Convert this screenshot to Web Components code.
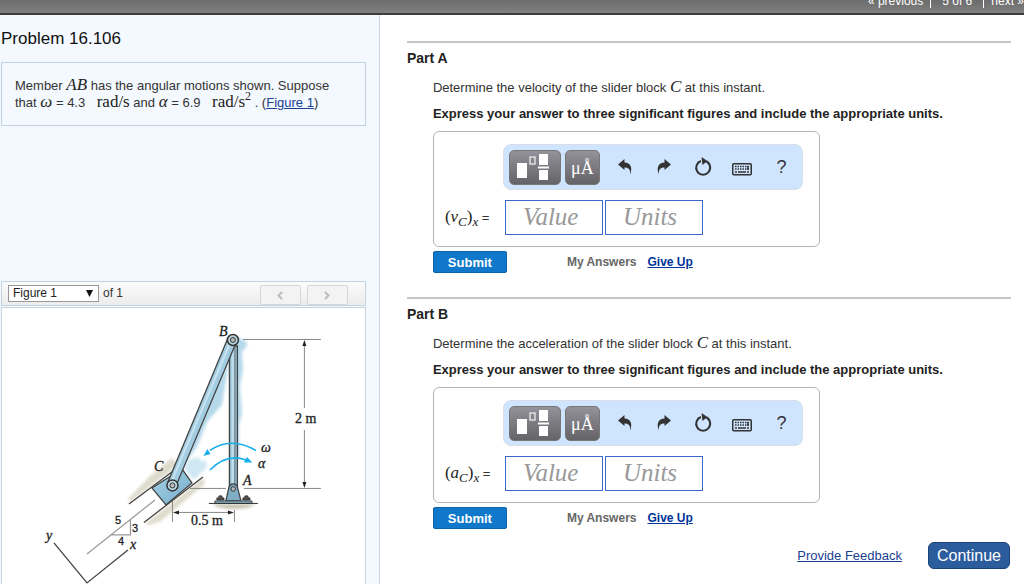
<!DOCTYPE html>
<html lang="en">
<head>
<meta charset="utf-8">
<meta name="viewport" content="width=device-width, initial-scale=1">
<title>Problem 16.106</title>
<style>
  body {
    margin: 0;
    font: 13px/17px "Liberation Sans", Arial, sans-serif;
    color: #333;
    background: #fff;
  }
</style>
</head>
<body>
<homework-page>
  <page-nav slot="nav"></page-nav>
  <problem-statement slot="problem" heading="Problem 16.106">Member <math-var>AB</math-var> has the angular motions shown. Suppose that <math-var>ω</math-var> = 4.3 &nbsp;<math-var upright>rad/s</math-var> and <math-var>α</math-var> = 6.9 &nbsp;<math-var upright>rad/s<sup>2</sup></math-var> . (<a href="#figure">Figure 1</a>)</problem-statement>
  <figure-viewer slot="problem" id="figure"><linkage-figure></linkage-figure></figure-viewer>
  <answer-part heading="Part A" symbol="v">Determine the velocity of the slider block <math-var>C</math-var> at this instant.</answer-part>
  <answer-part heading="Part B" symbol="a">Determine the acceleration of the slider block <math-var>C</math-var> at this instant.</answer-part>
  <page-footer slot="footer"></page-footer>
</homework-page>

<script>
class HomeworkPage extends HTMLElement {
  connectedCallback() {
    this.attachShadow({ mode: "open" }).innerHTML = `
      <style>
        :host {display: flex; flex-direction: column; min-height: 100vh;}
        .columns {display: grid; grid-template-columns: 37.1% 1fr; flex: 1;}
        aside {
          display: flex; flex-direction: column; justify-content: space-between;
          box-sizing: border-box; padding: 14px 13px 0 1px;
          background: #f4f9ff; border-right: 1px solid #c9d7e4;
        }
        main {padding: 26px 13px 0 27px;}
      </style>
      <slot name="nav"></slot>
      <div class="columns">
        <aside><slot name="problem"></slot></aside>
        <main><slot></slot><slot name="footer"></slot></main>
      </div>
    `;
  }
}
customElements.define("homework-page", HomeworkPage);

class PageNav extends HTMLElement {
  connectedCallback() {
    this.attachShadow({ mode: "open" }).innerHTML = `
      <style>
        :host {
          display: flex; justify-content: flex-end; align-items: flex-end;
          box-sizing: border-box; height: 15px; overflow: hidden; padding-bottom: 5px;
          background: linear-gradient(#6c6c6c, #808080);
          border-bottom: 2px solid #3c3c3c;
          font-size: 12px; line-height: 14px; color: #fff;
        }
        a {color: inherit; text-decoration: none; white-space: nowrap;}
        span {border: 1px solid #fff; border-width: 0 1px; padding: 0 11px; margin: 0 7px;}
      </style>
      <a href="#previous">« previous</a><span>5 of 6</span><a href="#next">next »</a>
    `;
  }
}
customElements.define("page-nav", PageNav);

class MathVar extends HTMLElement {
  connectedCallback() {
    this.attachShadow({ mode: "open" }).innerHTML = `
      <style>
        :host {font: italic 17px/0 "Liberation Serif", "Times New Roman", serif; color: #222;}
        :host([upright]) {font-style: normal;}
        ::slotted(sup) {font-size: 12px; line-height: 0;}
      </style><slot></slot>`;
  }
}
customElements.define("math-var", MathVar);

class ProblemStatement extends HTMLElement {
  connectedCallback() {
    this.attachShadow({ mode: "open" }).innerHTML = `
      <style>
        :host {display: block;}
        h1 {margin: 0 0 13px; font-size: 17px; line-height: 20px; font-weight: normal; color: #111;}
        p {margin: 0; padding: 14px 13px; border: 1px solid #bfd2e0;}
        ::slotted(a) {color: #1a3f94;}
      </style>
      <h1>${this.getAttribute("heading")}</h1>
      <p><slot></slot></p>
    `;
  }
}
customElements.define("problem-statement", ProblemStatement);

class FigureViewer extends HTMLElement {
  connectedCallback() {
    this.attachShadow({ mode: "open" }).innerHTML = `
      <style>
        :host {display: block;}
        .bar {
          display: flex; align-items: center; box-sizing: border-box; height: 25px;
          padding: 0 17px 0 6px; margin-bottom: 1px;
          border: 1px solid #c3d3e0; background: linear-gradient(#fbfbfb, #ececec);
        }
        .pick {display: grid; align-items: center; margin-right: 4px;}
        .pick > * {grid-area: 1 / 1;}
        .pick svg {justify-self: end; margin-right: 6px; pointer-events: none;}
        select {
          appearance: none; width: 91px; height: 17px; padding: 0 20px 0 4px;
          border: 1px solid #999; border-radius: 0; background: #fff;
          font: 12px/15px "Liberation Sans", Arial, sans-serif; color: #222;
        }
        .of {flex: 1; font-size: 12px;}
        button {
          display: grid; place-items: center; width: 41px; height: 20px; padding: 0; margin: 3px 0 0 6px;
          border: 1px solid #d6d6d6; border-radius: 2px; background: #f3f3f3;
        }
        .frame {border: 1px solid #c3d3e0; border-bottom: 0; background: #fff;}
      </style>
      <div class="bar">
        <div class="pick">
          <select id="pick" aria-label="Figure"><option>Figure 1</option></select>
          <svg width="7" height="7"><path d="M0 0h7L3.500 7z" fill="#111"/></svg>
        </div>
        <label class="of" for="pick">of 1</label>
        <button disabled aria-label="Previous figure"><svg width="6" height="9"><path d="M5 1L1.500 4.500 5 8" fill="none" stroke="#bbb" stroke-width="2"/></svg></button>
        <button disabled aria-label="Next figure"><svg width="6" height="9"><path d="M1 1l3.500 3.500L1 8" fill="none" stroke="#bbb" stroke-width="2"/></svg></button>
      </div>
      <div class="frame"><slot></slot></div>
    `;
  }
}
customElements.define("figure-viewer", FigureViewer);

class LinkageFigure extends HTMLElement {
  connectedCallback() {
    this.attachShadow({ mode: "open" }).innerHTML = `
      <style>
        :host {display: block;}
        svg {display: block; width: 100%;}
        text {font: 14px "Liberation Serif", serif; fill: #222; stroke: #222; stroke-width: .3px;}
        .it {font-style: italic;}
        .sm {font: 11px "Liberation Sans", sans-serif;}
        .dim {stroke: #888; fill: none;}
        .edge {stroke: #444; stroke-width: 1.3;}
      </style>
      <svg viewBox="2 308 363 276" role="img" aria-label="Linkage with slider block C">
        <defs>
          <filter id="soft" x="-30%" y="-30%" width="160%" height="160%"><feGaussianBlur stdDeviation="1.500"/></filter>
          <linearGradient id="bar"><stop offset="0" stop-color="#7fb2cc"/><stop offset=".4" stop-color="#c3e1ef"/><stop offset="1" stop-color="#86bad5"/></linearGradient>
          <linearGradient id="block" x2="1" y2="1"><stop offset="0" stop-color="#a8d3e7"/><stop offset="1" stop-color="#74acca"/></linearGradient>
        </defs>
        <g filter="url(#soft)">
          <path d="M130 502l49-37-7-7-22 18-22 23z" fill="#dedbcc"/>
          <path d="M145 524l58-46 2 6-44 37-11 4z" fill="#dedbcc"/>
          <path d="M213 504h43l-8 4-9 1-10 0-12-2z" fill="#c9c6b3"/>
          <path d="M236 337l10 4 1 5-5 6 1 18-3 16 2 27-3 13v32h-4zM229 362l-7 43-15 17-10 25-12 16 2-20z" fill="#b5d9ea"/>
          <path d="M184 468l5-8 9-3 5 5 3-3 1 8-13 13z" fill="#cfe7f2"/>
        </g>
        <path class="dim" d="M243 339.500h78M244 488.500h77M190 488.500h36M304.500 344v64M304.500 430v54M172.500 495v27M234.500 510v12M177 512.500h53"/>
        <path d="M304.500 340l-2 6h4zM304.500 488l-2-6h4zM173 512.500l6-2v4zM234 512.500l-6-2v4z" fill="#222"/>
        <path d="M152 488l30-19 10 14-26 22z" fill="url(#block)" class="edge"/>
        <path class="edge" d="M129 504l49-36.500M144 522.500l59-45.500" fill="none"/>
        <path d="M229.500 346h8v140h-8z" fill="url(#bar)" class="edge"/>
        <path d="M235 346v140" stroke="#666"/>
        <path d="M228 338L168 482l8 4 60-143z" fill="#a2cde2" class="edge"/>
        <path d="M230.500 342L171.500 482" stroke="#c9e4f0" stroke-width="2"/>
        <circle cx="233" cy="340" r="5.500" fill="#b9d7e4" stroke="#333" stroke-width="1.500"/>
        <circle cx="233" cy="340" r="2.500" fill="#bbb" stroke="#333"/>
        <circle cx="172.500" cy="485.500" r="5.500" fill="#b9d7e4" stroke="#333" stroke-width="1.500"/>
        <circle cx="172.500" cy="485.500" r="2.500" fill="#bbb" stroke="#333"/>
        <path d="M226 501l3-14a4.500 4.500 0 018.500 0l3.500 14z" fill="#7fadc3" class="edge"/>
        <circle cx="233.300" cy="489" r="2.300" fill="#bbb" stroke="#333"/>
        <path d="M217 500v-2h2v-2h3v2h2v2zM243 500v-2h2v-2h3v2h2v2z" fill="#555" stroke="#333"/>
        <path d="M215 501h37v2.500h-37z" fill="#7fadc3" stroke="#444"/>
        <path d="M209 503.500h49" stroke="#333"/>
        <path d="M256 450.500Q231 436 210 450.500M210 470Q227 453 246 460" fill="none" stroke="#19afea" stroke-width="1.600"/>
        <path d="M203.500 456l4-7 3 5zM252.500 462.500l-8.500 0 3-5.500z" fill="#19afea"/>
        <path d="M87 554l68-54M110 535h20.500v-16" stroke="#999" fill="none" stroke-width="1.200"/>
        <path d="M54 543l33 40 41-33" stroke="#444" fill="none" stroke-width="1.300"/>
        <text class="it" x="219" y="336">B</text>
        <text class="it" x="154" y="471">C</text>
        <text class="it" x="243" y="485">A</text>
        <text class="it" x="261" y="452">ω</text>
        <text class="it" x="258" y="468">α</text>
        <text x="295" y="423">2 m</text>
        <text x="191" y="525">0.5 m</text>
        <text class="sm" x="115" y="524">5</text>
        <text class="sm" x="132" y="532">3</text>
        <text class="sm" x="118" y="545">4</text>
        <text class="it" x="46" y="540">y</text>
        <text class="it" x="130" y="549">x</text>
      </svg>
    `;
  }
}
customElements.define("linkage-figure", LinkageFigure);

class MathToolbar extends HTMLElement {
  connectedCallback() {
    this.attachShadow({ mode: "open" }).innerHTML = `
      <style>
        :host {
          display: flex; align-items: center; box-sizing: border-box; width: 300px; height: 46px;
          padding-left: 5px; border: 1px solid #d8dfe8; border-radius: 8px; background: #cfe5ff;
        }
        button {
          display: grid; place-items: center; width: 39px; height: 35px; padding: 0; border: 0;
          background: none; color: #333; font: 18px "Liberation Sans", Arial, sans-serif;
        }
        .key {
          border: 1px solid #777; border-radius: 5px; margin-right: 4px;
          background: linear-gradient(#94929a, #646366); color: #fff;
        }
        .template {width: 52px;}
        .units {width: 35px; margin-right: 6px; padding-top: 3px; font: 18px "Liberation Serif", serif;}
      </style>
      <button class="key template" aria-label="Templates">
        <svg width="50" height="33"><path d="M7 12h10v15H7zM29 3h9v11h-9zM29 19h9v10h-9zM28 15.500h11v2H28z" fill="#fff"/><path d="M20 6h5v7h-5z" fill="none" stroke="#ddd" stroke-width="1.500"/></svg>
      </button>
      <button class="key units" aria-label="Symbols">μÅ</button>
      <button aria-label="Undo"><svg width="16" height="18"><path d="M1 6.500L7.500 1v3.500c6 0 8.500 5 5.500 12 .5-5-1-7-5.500-7V12z" fill="#333"/></svg></button>
      <button aria-label="Redo"><svg width="16" height="18"><path d="M15 6.500L8.500 1v3.500c-6 0-8.500 5-5.500 12-.5-5 1-7 5.500-7V12z" fill="#333"/></svg></button>
      <button aria-label="Reset"><svg width="18" height="20"><path d="M12.500 4.500a7 7 0 11-5.500-.5" fill="none" stroke="#333" stroke-width="2"/><path d="M7.500 0l6 4-5 4z" fill="#333"/></svg></button>
      <button aria-label="Keyboard"><svg width="20" height="17"><rect x=".75" y="4.750" width="18.500" height="11" rx="1" fill="none" stroke="#333" stroke-width="1.500"/><path d="M3 7.500h14M3 10h14" stroke="#333" stroke-width="1.500" stroke-dasharray="1.500 1"/><path d="M3 13h2M6 13h8M15 13h2M16 7v4" stroke="#333" stroke-width="1.500"/></svg></button>
      <button aria-label="Help">?</button>
    `;
  }
}
customElements.define("math-toolbar", MathToolbar);

class AnswerPart extends HTMLElement {
  connectedCallback() {
    const symbol = this.getAttribute("symbol");
    this.attachShadow({ mode: "open" }).innerHTML = `
      <style>
        :host {display: block; margin-bottom: 24px; border-top: 2px solid #c5c5c5;}
        h2 {margin: 6px 0 12px; font-size: 14px; line-height: 18px; color: #222;}
        .body {padding-left: 26px;}
        p {margin: 0 0 9px; line-height: 17px;}
        .how {font-weight: bold; color: #222;}
        .box {
          display: grid; grid-template-columns: 58px 300px; row-gap: 10px; align-items: center;
          box-sizing: border-box; width: fit-content; padding: 12px 16px 11px 11px;
          border: 1px solid #b5b5b5; border-radius: 6px;
        }
        math-toolbar {grid-column: 2;}
        .fields {display: flex; gap: 2px; padding-left: 2px;}
        input {
          box-sizing: border-box; width: 98px; height: 35px; padding: 0 4px 2px 17px;
          border: 1px solid #3a69cc; border-radius: 0; background: #fff;
          font: italic 25px "Liberation Serif", "Times New Roman", serif;
        }
        input::placeholder {color: #999; opacity: 1;}
        sub {line-height: 0; font-size: 13px;}
        .actions {display: flex; align-items: center; margin-top: 4px; font-size: 12px; font-weight: bold;}
        .actions button {
          width: 74px; height: 22px; margin-right: 60px; padding: 0;
          border: 1px solid #0d62a8; border-radius: 2px; background: #0f78cb; color: #fff;
          font: bold 13px "Liberation Sans", Arial, sans-serif;
        }
        .actions span {margin-right: 11px; color: #666;}
        .actions a {color: #003399;}
      </style>
      <h2>${this.getAttribute("heading")}</h2>
      <div class="body">
        <p><slot></slot></p>
        <p class="how">Express your answer to three significant figures and include the appropriate units.</p>
        <div class="box">
          <math-toolbar></math-toolbar>
          <label for="value"><math-var upright>(<i>${symbol}<sub>C</sub></i>)<sub><i>x</i></sub></math-var> =</label>
          <div class="fields">
            <input id="value" placeholder="Value">
            <input aria-label="Units" placeholder="Units">
          </div>
        </div>
        <div class="actions"><button>Submit</button><span>My Answers</span><a href="#give-up">Give Up</a></div>
      </div>
    `;
  }
}
customElements.define("answer-part", AnswerPart);

class PageFooter extends HTMLElement {
  connectedCallback() {
    this.attachShadow({ mode: "open" }).innerHTML = `
      <style>
        :host {display: flex; justify-content: flex-end; align-items: center; gap: 26px; margin-top: -11px; padding-right: 1px;}
        a {color: #1a3f94;}
        button {
          width: 82px; height: 27px; padding: 0; border: 1px solid #1d4478; border-radius: 6px;
          background: #2b5c9c; color: #fff; font: 16px "Liberation Sans", Arial, sans-serif;
        }
      </style>
      <a href="#feedback">Provide Feedback</a><button>Continue</button>
    `;
  }
}
customElements.define("page-footer", PageFooter);
</script>
</body>
</html>
